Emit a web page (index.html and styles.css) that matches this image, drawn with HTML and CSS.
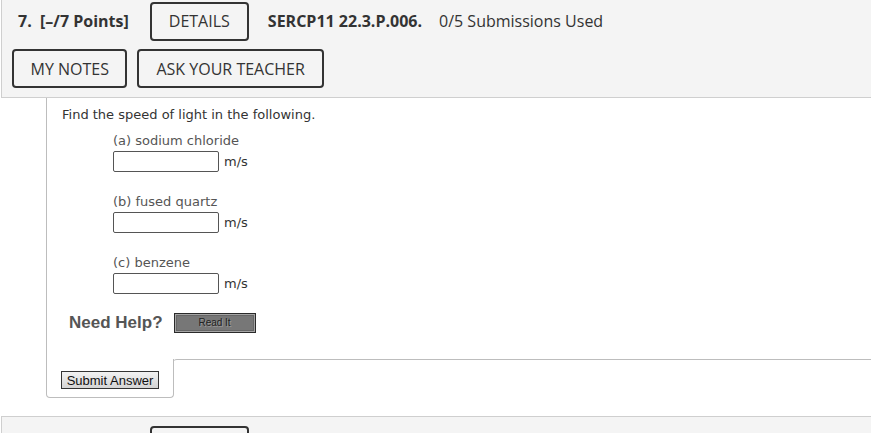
FILE: index.html
```html
<!DOCTYPE html>
<html>
<head>
<meta charset="utf-8">
<link rel="stylesheet" href="styles.css">
</head>
<body>
<div class="panel">
  <div class="row row-top">
    <span class="qnum">7.&nbsp; [–/7 Points]</span>
    <button class="btn">DETAILS</button>
    <span class="qcode">SERCP11 22.3.P.006.</span>
    <span class="subs">0/5 Submissions Used</span>
  </div>
  <div class="row row-actions">
    <button class="btn btn-notes">MY NOTES</button>
    <button class="btn">ASK YOUR TEACHER</button>
  </div>
</div>

<div class="question">
  <div class="qbody">
    <div class="intro">Find the speed of light in the following.</div>
    <div class="part">
      <div class="label">(a) sodium chloride</div>
      <div class="answer"><span class="input"></span><span class="unit">m/s</span></div>
    </div>
    <div class="part">
      <div class="label">(b) fused quartz</div>
      <div class="answer"><span class="input"></span><span class="unit">m/s</span></div>
    </div>
    <div class="part">
      <div class="label">(c) benzene</div>
      <div class="answer"><span class="input"></span><span class="unit">m/s</span></div>
    </div>
    <div class="help">
      <span class="help-label">Need Help?</span>
      <button class="readit">Read It</button>
    </div>
  </div>
  <div class="footer">
    <div class="tab"><button class="submit">Submit Answer</button></div>
    <div class="rest"></div>
  </div>
</div>

<div class="panel panel-next">
  <div class="row row-top">
    <span class="spacer"></span>
    <button class="btn">DETAILS</button>
  </div>
</div>
</body>
</html>
```

FILE: styles.css
```css
html, body {
  margin: 0;
  padding: 0;
  background: #fff;
  overflow: hidden;
}

body {
  width: 871px;
  height: 433px;
  font-family: "Open Sans", "Liberation Sans", sans-serif;
}

.panel {
  margin-left: 1px;
  background: #f4f4f4;
  border-left: 1px solid #cfcfcf;
  border-bottom: 1px solid #cfcfcf;
  padding: 2px 0 9px 10px;
}

.row {
  display: flex;
  align-items: center;
}

.row-top {
  height: 38px;
}

.row-actions {
  margin-top: 9px;
  gap: 10px;
}

.qnum {
  font-weight: 700;
  font-size: 16px;
  color: #333;
  margin-left: 6px;
  margin-right: 21px;
}

.spacer {
  display: inline-block;
  width: 138px;
}

.btn {
  font-family: "Open Sans", "Liberation Sans", sans-serif;
  font-size: 16px;
  color: #333;
  background: transparent;
  border: 2px solid #333;
  border-radius: 4px;
  height: 39px;
  padding: 0 17px;
  box-sizing: border-box;
  cursor: pointer;
}

.btn-notes {
  padding: 0 16.5px;
}

.qcode {
  font-weight: 700;
  font-size: 16px;
  color: #333;
  margin-left: 19px;
}

.subs {
  font-size: 16px;
  color: #333;
  margin-left: 17px;
}

.question {
  margin-left: 46px;
}

.qbody {
  border-left: 1px solid #bdbdbd;
  padding: 9px 0 26px 15px;
  font-family: "DejaVu Sans", Verdana, sans-serif;
  font-size: 13px;
  color: #333;
}

.intro {
  line-height: 16px;
}

.part {
  margin-left: 51px;
  margin-top: 10px;
}

.part + .part {
  margin-top: 22px;
}

.label {
  line-height: 16px;
  color: #555;
}

.answer {
  margin-top: 2px;
  display: flex;
  align-items: center;
  height: 21px;
}

.input {
  display: inline-block;
  width: 106px;
  height: 21px;
  box-sizing: border-box;
  border: 1px solid #555;
  border-radius: 2px;
  background: #fff;
}

.unit {
  margin-left: 5px;
  color: #333;
}

.help {
  display: flex;
  align-items: center;
  margin-top: 18px;
  margin-left: 7px;
  height: 21px;
}

.help-label {
  font-family: "Liberation Sans", Arial, sans-serif;
  font-weight: 700;
  font-size: 17px;
  color: #555;
}

.readit {
  margin-left: 11px;
  width: 82px;
  height: 20px;
  box-sizing: border-box;
  background: #777;
  border: 1px solid #2a2a2a;
  box-shadow: inset 0 0 0 1px #a5a5a5, inset 0 0 0 2px #666;
  font-family: "Liberation Sans", Arial, sans-serif;
  font-size: 10px;
  color: #222;
  text-shadow: 1px 1px 0 #9a9a9a;
  padding: 0;
  cursor: pointer;
}

.footer {
  display: flex;
}

.tab {
  border-left: 1px solid #bdbdbd;
  border-right: 1px solid #bdbdbd;
  border-bottom: 1px solid #bdbdbd;
  border-radius: 0 0 4px 4px;
  padding: 12px 14px 8px 14px;
}

.submit {
  display: block;
  height: 18px;
  width: 98px;
  box-sizing: border-box;
  padding: 0;
  font-family: "Liberation Sans", Arial, sans-serif;
  font-size: 13px;
  color: #111;
  background: linear-gradient(#f2f2f2, #d4d4d4);
  border: 1px solid #333;
  cursor: pointer;
}

.rest {
  flex: 1;
  border-top: 1px solid #bdbdbd;
  border-top-left-radius: 4px;
  margin-left: -1px;
}

.panel-next {
  margin-top: 18px;
  border-top: 1px solid #cfcfcf;
  border-bottom: none;
  padding-top: 9px;
}
```
